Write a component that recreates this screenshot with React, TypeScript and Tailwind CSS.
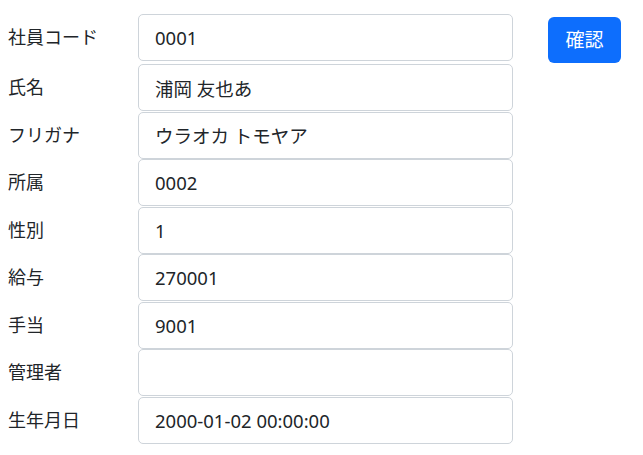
const fields: { label: string; value: string }[] = [
  { label: '社員コード', value: '0001' },
  { label: '氏名', value: '浦岡 友也あ' },
  { label: 'フリガナ', value: 'ウラオカ トモヤア' },
  { label: '所属', value: '0002' },
  { label: '性別', value: '1' },
  { label: '給与', value: '270001' },
  { label: '手当', value: '9001' },
  { label: '管理者', value: '' },
  { label: '生年月日', value: '2000-01-02 00:00:00' },
]

export default function App() {
  return (
    <div
      className="w-[643px] h-[455px] bg-white text-[#212529] pt-[14px] pl-[8px]"
      style={{ fontFamily: '"Noto Sans", "Noto Sans CJK JP", sans-serif' }}
    >
      {fields.map((f, i) => (
        <div key={f.label} className={`flex items-center ${i === 0 ? 'h-[50px] items-start' : 'h-[47.5px]'}`}>
          <label className={`w-[130px] text-[18px] ${i === 0 ? 'leading-[47px]' : ''}`}>{f.label}</label>
          <input
            readOnly
            value={f.value}
            className="w-[375px] h-[47px] border border-[#ced4da] rounded-[5px] px-[16px] text-[18.5px] text-[#212529] outline-none"
          />
          {i === 0 && (
            <button className="ml-[35px] mt-[3px] w-[73px] h-[46px] rounded-[6px] bg-[#0d6efd] text-white text-[19px]">
              確認
            </button>
          )}
        </div>
      ))}
    </div>
  )
}
